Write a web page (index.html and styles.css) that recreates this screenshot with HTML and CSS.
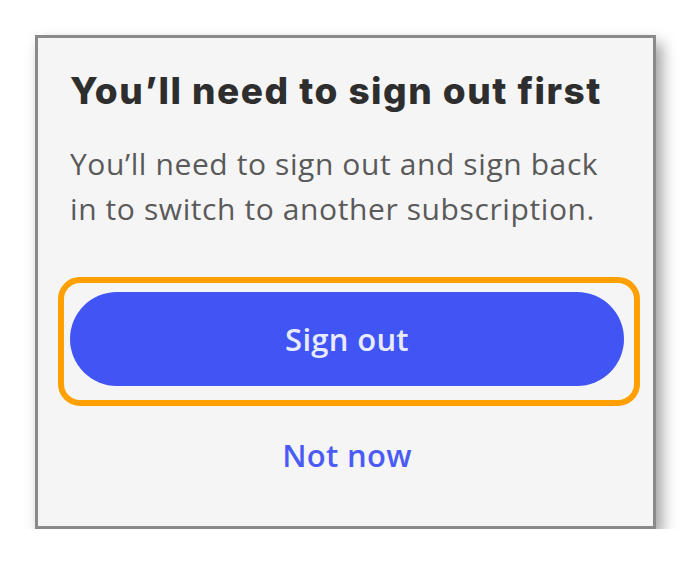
FILE: index.html
```html
<!DOCTYPE html>
<html lang="en">
<head>
    <meta charset="UTF-8">
    <meta name="viewport" content="width=device-width, initial-scale=1.0">
    <title>Sign out first</title>
    <link rel="stylesheet" href="styles.css">
</head>
<body>
    <div class="dialog">
        <h1 class="dialog-title">You’ll need to sign out first</h1>
        <p class="dialog-text">You’ll need to sign out and sign back in to switch to another subscription.</p>

        <div class="focus-ring">
            <button class="primary-btn">Sign out</button>
        </div>

        <button class="link-btn">Not now</button>
    </div>
</body>
</html>
```

FILE: styles.css
```css
body {
    margin: 0;
    background-color: #ffffff;
    font-family: 'Open Sans', 'Liberation Sans', sans-serif;
}
.dialog {
    width: 621px;
    height: 494px;
    margin: 35px 0 0 35px;
    box-sizing: border-box;
    padding: 30px 29px 0 32px;
    background-color: #f5f5f5;
    border: 3px solid #8a8a8a;
    box-shadow: 6px 8px 14px rgba(0,0,0,0.38);
    display: flex;
    flex-direction: column;
}
.dialog-title {
    margin: 0;
    font-family: 'Inter', 'Liberation Sans', sans-serif;
    font-weight: 800;
    font-size: 37px;
    line-height: 46px;
    letter-spacing: 1.5px;
    color: #2e2e2e;
    white-space: nowrap;
}
.dialog-text {
    margin: 27px 0 0;
    font-size: 30px;
    line-height: 45px;
    letter-spacing: 0.6px;
    color: #5a5a5a;
}
.focus-ring {
    margin: 46px -16px 0 -12px;
    padding: 9px 10px 14px 6px;
    border: 6px solid #ffa000;
    border-radius: 22px;
}
.primary-btn {
    display: block;
    width: 100%;
    height: 94px;
    border: none;
    border-radius: 47px;
    background-color: #4055f4;
    color: #e8ebff;
    font-family: inherit;
    font-size: 31px;
    font-weight: 600;
    letter-spacing: 0.3px;
    cursor: pointer;
}
.link-btn {
    margin-top: 28px;
    align-self: center;
    background: none;
    border: none;
    padding: 0;
    color: #4a5cf5;
    font-family: inherit;
    font-size: 31px;
    font-weight: 600;
    letter-spacing: 0.3px;
    cursor: pointer;
}
```
